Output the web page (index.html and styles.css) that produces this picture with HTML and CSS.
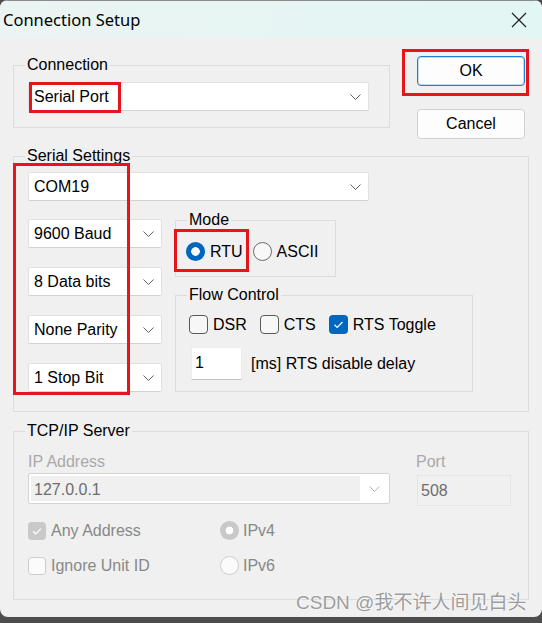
FILE: index.html
```html
<!DOCTYPE html>
<html>
<head>
<meta charset="utf-8">
<title>Connection Setup</title>
<link rel="stylesheet" href="styles.css">
</head>
<body>
<div class="window">
  <div class="titlebar">
    <span class="title">Connection Setup</span>
    <svg class="close" viewBox="0 0 16 16"><path d="M1 1 L15 15 M15 1 L1 15" stroke="#1a1a1a" stroke-width="1.1" fill="none"/></svg>
  </div>
  <div class="content">
    <div class="top-row">
      <div class="group conn">
        <span class="glabel">Connection</span>
        <div class="combo wide in-conn"><span>Serial Port</span><svg class="chev" viewBox="0 0 11 6"><path d="M0.5 0.5 L5.5 5.5 L10.5 0.5" fill="none" stroke="#606060"/></svg></div>
      </div>
      <div class="buttons">
        <button class="btn ok">OK</button>
        <button class="btn">Cancel</button>
      </div>
    </div>

    <div class="group serial">
      <span class="glabel">Serial Settings</span>
      <div class="combo wide in-serial"><span>COM19</span><svg class="chev" viewBox="0 0 11 6"><path d="M0.5 0.5 L5.5 5.5 L10.5 0.5" fill="none" stroke="#606060"/></svg></div>
      <div class="serial-body">
        <div class="col-left">
          <div class="combo"><span>9600 Baud</span><svg class="chev" viewBox="0 0 11 6"><path d="M0.5 0.5 L5.5 5.5 L10.5 0.5" fill="none" stroke="#606060"/></svg></div>
          <div class="combo"><span>8 Data bits</span><svg class="chev" viewBox="0 0 11 6"><path d="M0.5 0.5 L5.5 5.5 L10.5 0.5" fill="none" stroke="#606060"/></svg></div>
          <div class="combo"><span>None Parity</span><svg class="chev" viewBox="0 0 11 6"><path d="M0.5 0.5 L5.5 5.5 L10.5 0.5" fill="none" stroke="#606060"/></svg></div>
          <div class="combo"><span>1 Stop Bit</span><svg class="chev" viewBox="0 0 11 6"><path d="M0.5 0.5 L5.5 5.5 L10.5 0.5" fill="none" stroke="#606060"/></svg></div>
        </div>
        <div class="col-right">
          <div class="group mode">
            <span class="glabel">Mode</span>
            <div class="radios">
              <span class="opt"><span class="radio on"></span>RTU</span>
              <span class="opt"><span class="radio"></span>ASCII</span>
            </div>
          </div>
          <div class="group flow">
            <span class="glabel">Flow Control</span>
            <div class="checks">
              <span class="opt"><span class="cbox"></span>DSR</span>
              <span class="opt"><span class="cbox"></span>CTS</span>
              <span class="opt"><span class="cbox on"><svg viewBox="0 0 19 19"><path d="M5.5 9.8 L8.2 12.4 L13.5 7" fill="none" stroke="#fff" stroke-width="1.2"/></svg></span>RTS Toggle</span>
            </div>
            <div class="delay">
              <span class="textbox">1</span>
              <span>[ms] RTS disable delay</span>
            </div>
          </div>
        </div>
      </div>
    </div>

    <div class="group tcp">
      <span class="glabel">TCP/IP Server</span>
      <div class="tcp-fields">
        <div class="field-ip">
          <div class="dlabel">IP Address</div>
          <div class="combo disabled"><span class="dval">127.0.0.1</span><span class="dbtn"><svg class="chev" viewBox="0 0 11 6"><path d="M0.5 0.5 L5.5 5.5 L10.5 0.5" fill="none" stroke="#b5b5b5"/></svg></span></div>
        </div>
        <div class="field-port">
          <div class="dlabel">Port</div>
          <div class="dinput">508</div>
        </div>
      </div>
      <div class="opts">
        <span class="opt dis"><span class="cbox dis-on"><svg viewBox="0 0 18 18"><path d="M5 9.3 L7.7 11.9 L13 6.6" fill="none" stroke="#fff" stroke-width="1.2"/></svg></span>Any Address</span>
        <span class="opt dis"><span class="radio dis-on"></span>IPv4</span>
        <span class="opt dis"><span class="cbox dis-off"></span>Ignore Unit ID</span>
        <span class="opt dis"><span class="radio dis-off"></span>IPv6</span>
      </div>
    </div>
  </div>

  <div class="mark mark-port"></div>
  <div class="mark mark-ok"></div>
  <div class="mark mark-left"></div>
  <div class="mark mark-rtu"></div>
  <div class="watermark">CSDN @我不许人间见白头</div>
</div>
</body>
</html>
```
FILE: styles.css
```css
* { box-sizing: border-box; }
html, body { margin: 0; padding: 0; }
body {
  width: 542px;
  height: 623px;
  overflow: hidden;
  background: #4d4d4d;
  font-family: "Liberation Sans", Arial, sans-serif;
  font-size: 16px;
  line-height: 18px;
  color: #000;
}
.window {
  position: relative;
  height: 617px;
  background: #f0f0f0;
  border-radius: 8px;
  overflow: hidden;
}
.titlebar {
  height: 38px;
  border-top: 1px solid #8c8c8c;
  display: flex;
  align-items: center;
  justify-content: space-between;
  padding: 0 15px 0 3px;
  background: linear-gradient(90deg, #ebf4f2 0%, #e2f6f4 100%);
}
.title {
  font-family: "Noto Sans", "Open Sans", sans-serif;
  font-size: 16.5px;
  line-height: 20px;
  color: #000;
}
.close { width: 16px; height: 16px; }
.content { padding-left: 13px; }

.top-row { display: flex; align-items: flex-start; gap: 27px; }

.group { border: 1px solid #dcdcdc; }
.glabel {
  display: block;
  width: max-content;
  height: 18px;
  margin: -10px 0 0 11px;
  padding: 0 2px;
  background: #f0f0f0;
  white-space: nowrap;
}

.combo {
  display: flex;
  align-items: center;
  justify-content: space-between;
  height: 29px;
  background: #fff;
  border: 1px solid #e1e1e1;
  border-bottom-color: #d2d2d2;
  border-radius: 2px;
  padding: 0 7px 0 5px;
  white-space: nowrap;
}
.chev { width: 11px; height: 6px; flex: none; }
.wide { width: 341px; }

.conn { width: 377px; margin-top: 27px; padding-bottom: 16px; }
.in-conn { margin: 8px 0 0 14px; }

.buttons { display: flex; flex-direction: column; gap: 23px; margin-top: 18px; }
.btn {
  width: 108px;
  height: 30px;
  padding: 0;
  border: 1px solid #d0d0d0;
  border-radius: 4px;
  background: #fdfdfd;
  font: inherit;
  color: #000;
}
.btn.ok { border-color: #1a7fd6; box-shadow: inset 0 0 0 1px #bfdcf5; }

.serial { width: 516px; margin-top: 17px; padding-bottom: 19px; }
.in-serial { margin: 7px 0 0 14px; }
.serial-body { display: flex; align-items: flex-start; gap: 13px; margin-left: 14px; }
.col-left { display: flex; flex-direction: column; gap: 19px; width: 134px; margin-top: 18px; }
.col-left .combo { width: 134px; }
.col-right { margin-top: 19px; }

.opt { display: inline-flex; align-items: center; gap: 5px; white-space: nowrap; }
.radio {
  width: 19px; height: 19px; flex: none;
  border-radius: 50%;
  border: 1px solid #6a6a6a;
  background: #f8f8f8;
}
.radio.on { border: none; background: radial-gradient(circle, #fff 0 4px, #0067c0 4.6px); }
.cbox {
  width: 19px; height: 19px; flex: none;
  border-radius: 4px;
  border: 1px solid #5a5a5a;
  background: #f7f7f7;
  display: inline-flex;
}
.cbox svg { width: 100%; height: 100%; }
.cbox.on { border: none; background: #0067c0; }

.mode { width: 161px; padding-bottom: 15px; }
.radios { display: flex; align-items: center; gap: 10px; margin: 13px 0 0 10px; }

.flow { width: 298px; margin-top: 18px; padding-bottom: 11px; }
.checks { display: flex; align-items: center; gap: 13px; margin: 11px 0 0 13px; }
.delay { display: flex; align-items: center; gap: 9px; margin: 13px 0 0 15px; }
.textbox {
  width: 51px; height: 33px;
  background: #fff;
  border: 1px solid #ececec;
  border-bottom-color: #c4c4c4;
  padding: 6px 0 0 3px;
}

.tcp { width: 516px; margin-top: 19px; padding-bottom: 24px; }
.tcp-fields { display: flex; gap: 26px; margin: 13px 0 0 14px; }
.field-ip { width: 362px; }
.field-port { width: 95px; }
.dlabel { color: #a9a9a9; height: 18px; }
.combo.disabled {
  height: 31px;
  margin-top: 2px;
  padding: 2px 0 2px 2px;
  border-color: #d3d3d3;
}
.dval {
  flex: 1;
  align-self: stretch;
  background: #f0f0f0;
  color: #6d6d6d;
  padding: 5px 0 0 3px;
}
.dbtn { width: 29px; display: flex; justify-content: center; }
.dinput {
  height: 31px;
  margin: 4px 0 0 1px;
  border: 1px solid #e4e4e4;
  background: #f0f0f0;
  color: #6d6d6d;
  padding: 6px 0 0 3px;
}
.opts {
  display: grid;
  grid-template-columns: 192px auto;
  row-gap: 16px;
  margin: 15px 0 0 14px;
}
.opt.dis { color: #888; height: 19px; }
.cbox.dis-on, .cbox.dis-off { width: 18px; height: 18px; }
.cbox.dis-on { border: none; background: #c9c9c9; }
.cbox.dis-off { border: 1px solid #cdcdcd; background: #fbfbfb; }
.opts .radio { margin-right: -1px; }
.radio.dis-on { border: none; background: radial-gradient(circle, #fff 0 3.6px, #c8c8c8 4.2px); }
.radio.dis-off { border: 1px solid #cdcdcd; background: #fbfbfb; }

.mark { position: absolute; border: 3px solid #e8141c; }
.mark-port { left: 29px; top: 82px; width: 92px; height: 31px; }
.mark-ok { left: 402px; top: 49px; width: 127px; height: 47px; }
.mark-left { left: 13px; top: 163px; width: 117px; height: 232px; }
.mark-rtu { left: 174px; top: 229px; width: 75px; height: 43px; }

.watermark {
  position: absolute;
  left: 296px;
  top: 593px;
  font-family: "Liberation Sans", "Noto Sans CJK SC", sans-serif;
  font-size: 19px;
  line-height: 20px;
  color: #9c9c9c;
  white-space: nowrap;
  text-shadow: 0 0 1px #fff, 0 0 2px #fff;
}
```
